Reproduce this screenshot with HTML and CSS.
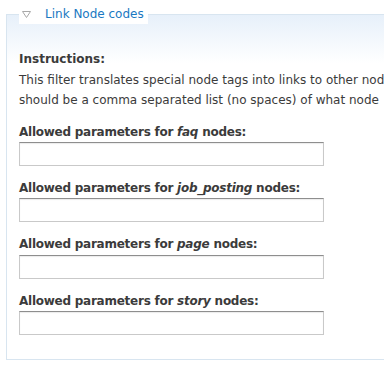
FILE: index.html
```html
<!DOCTYPE html>
<html>
<head>
<meta charset="utf-8">
<link rel="stylesheet" href="styles.css">
</head>
<body>
<fieldset class="box">
  <legend class="box-legend">
    <svg class="arrow" width="9" height="7" viewBox="0 0 9 7"><path d="M0.5 0.5 H8.5 L4.5 6.5 Z" fill="none" stroke="#a8a8a8" stroke-width="1"/></svg>
    <span class="legend-text">Link Node codes</span>
  </legend>
  <div class="desc">
    <div class="desc-title">Instructions:</div>
    <div class="desc-line">This filter translates special node tags into links to other nodes. The allowed parameters for each type</div>
    <div class="desc-line">should be a comma separated list (no spaces) of what node</div>
  </div>
  <div class="item">
    <label class="lbl">Allowed parameters for <em>faq</em> nodes:</label>
    <input class="field" type="text">
  </div>
  <div class="item">
    <label class="lbl">Allowed parameters for <em>job_posting</em> nodes:</label>
    <input class="field" type="text">
  </div>
  <div class="item">
    <label class="lbl">Allowed parameters for <em>page</em> nodes:</label>
    <input class="field" type="text">
  </div>
  <div class="item">
    <label class="lbl">Allowed parameters for <em>story</em> nodes:</label>
    <input class="field" type="text">
  </div>
</fieldset>
</body>
</html>
```
FILE: styles.css
```css
html, body {
  margin: 0;
  padding: 0;
  background: #ffffff;
  overflow: hidden;
}
body {
  font-family: "DejaVu Sans", Verdana, sans-serif;
  font-size: 12px;
  line-height: 20.4px;
  color: #3b3b3b;
  width: 700px;
}
.box {
  margin: 4px 0 0 6px;
  padding: 25px 12px 24px 12px;
  width: 600px;
  border: 1px solid #d8e5f0;
  background: linear-gradient(to bottom, #e7f0fa 0px, #ffffff 48px);
  box-sizing: border-box;
}
.box-legend {
  padding: 0 4px 0 3px;
  display: flex;
  align-items: center;
  background: #ffffff;
}
.arrow {
  display: block;
  margin-right: 14px;
}
.legend-text {
  color: #1a78c2;
}
.desc-title {
  font-weight: bold;
}
.desc-line {
  white-space: nowrap;
}
.desc {
  margin-bottom: 8px;
}
.item {
  margin-bottom: 9px;
}
.item:last-child {
  margin-bottom: 0;
}
.lbl {
  display: block;
  padding-top: 3px;
  font-weight: bold;
  letter-spacing: -0.25px;
  white-space: nowrap;
}
.lbl em {
  font-style: italic;
}
.field {
  display: block;
  box-sizing: border-box;
  width: 305px;
  height: 24px;
  margin: 0;
  padding: 2px 4px;
  border: 1px solid #c9c9c9;
  border-top-color: #8e8e8e;
  box-shadow: inset 0 1px 1px rgba(0,0,0,0.08);
  background: #ffffff;
  font-family: "DejaVu Sans", Verdana, sans-serif;
  font-size: 12px;
}
```
